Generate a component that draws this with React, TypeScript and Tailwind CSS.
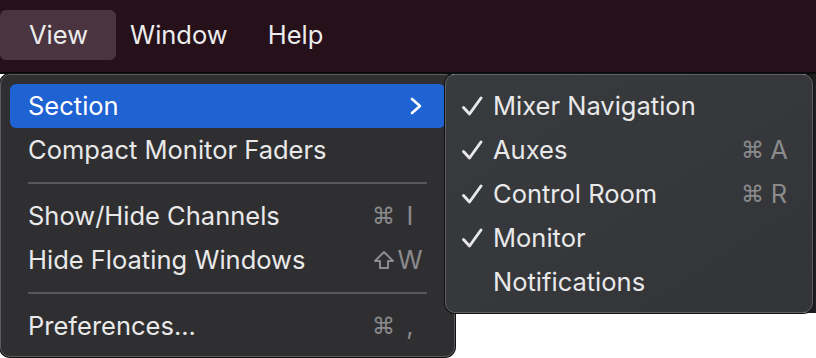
import React from "react";

const font = { fontFamily: "Inter, 'Noto Sans', sans-serif" };

function Check() {
  return (
    <svg width="22" height="20" viewBox="0 0 22 20" className="shrink-0">
      <path d="M2.5 11.5 L8.5 18 L20 2" fill="none" stroke="#e8e8e8" strokeWidth="2.9" strokeLinecap="round" strokeLinejoin="round" />
    </svg>
  );
}

function Chevron() {
  return (
    <svg width="14" height="18" viewBox="0 0 14 18">
      <path d="M3 2 L11 9 L3 16" fill="none" stroke="#ffffff" strokeWidth="2.6" strokeLinecap="round" strokeLinejoin="round" />
    </svg>
  );
}

function Cmd() {
  return (
    <span className="text-[23px] leading-none" style={{ fontFamily: "'DejaVu Sans', sans-serif" }}>⌘</span>
  );
}

function ShiftIcon() {
  return (
    <svg width="22" height="20" viewBox="0 0 22 20">
      <path d="M11 2 L20 11 L15 11 L15 18 L7 18 L7 11 L2 11 Z" fill="none" stroke="#8b8b8d" strokeWidth="2" strokeLinejoin="round" />
    </svg>
  );
}

function Shortcut({ mod, k }: { mod: "cmd" | "shift"; k: string }) {
  return (
    <div className="flex items-center text-[#8b8b8d]">
      <span className="flex w-[22px] justify-end">{mod === "cmd" ? <Cmd /> : <ShiftIcon />}</span>
      <span className="w-[30px] text-center">{k}</span>
    </div>
  );
}

function MainRow({ label, mod, k, active, sub }: { label: string; mod?: "cmd" | "shift"; k?: string; active?: boolean; sub?: boolean }) {
  return (
    <div className={`flex h-[44px] items-center justify-between rounded-[6px] pl-[18px] ${sub ? "pr-[22px]" : "pr-[20px]"} ${active ? "bg-[#1f62d2] text-white" : "text-[#e9e9ea]"}`}>
      <span>{label}</span>
      {sub && <Chevron />}
      {mod && k && <Shortcut mod={mod} k={k} />}
    </div>
  );
}

function SubRow({ label, checked, mod, k }: { label: string; checked?: boolean; mod?: "cmd" | "shift"; k?: string }) {
  return (
    <div className="flex h-[44px] items-center justify-between pl-[15px] pr-[18px] text-[#e9e9ea]">
      <div className="flex items-center gap-[10px]">
        <div className="w-[22px]">{checked && <Check />}</div>
        <span>{label}</span>
      </div>
      {mod && k && <Shortcut mod={mod} k={k} />}
    </div>
  );
}

function Sep() {
  return (
    <div className="flex h-[22px] items-center px-[18px]">
      <div className="h-[2px] w-full bg-[#58585b]" />
    </div>
  );
}

export default function App() {
  return (
    <div className="relative h-[358px] w-[816px] overflow-hidden bg-white text-[25.5px]" style={font}>
      <div className="flex h-[72px] items-start bg-[#26101a] pt-[10px] text-[#ececec]">
        <div className="flex h-[50px] w-[116px] items-center rounded-[6px] bg-[#4a3440] pl-[29px]">View</div>
        <div className="ml-[14px] flex h-[50px] items-center">Window</div>
        <div className="ml-[40px] flex h-[50px] items-center">Help</div>
      </div>
      <div className="h-[2px] bg-[#0a0a0a]" />
      <div className="absolute right-0 top-[74px] h-[239px] w-[10px] bg-[#1e1e20]" />

      <div className="absolute left-0 top-[74px] h-[283px] w-[455px] rounded-[10px] border border-[#5c5c5e] bg-[#2f2f31] px-[9px] py-[9px] shadow-[0_0_0_1px_#111]">
        <MainRow label="Section" active sub />
        <MainRow label="Compact Monitor Faders" />
        <Sep />
        <MainRow label="Show/Hide Channels" mod="cmd" k="I" />
        <MainRow label="Hide Floating Windows" mod="shift" k="W" />
        <Sep />
        <MainRow label="Preferences..." mod="cmd" k="," />
      </div>

      <div className="absolute left-[445px] top-[74px] h-[239px] w-[368px] rounded-[10px] border border-[#5f6163] bg-gradient-to-br from-[#383b3e] to-[#333437] py-[9px] shadow-[0_0_0_1px_#111]">
        <SubRow label="Mixer Navigation" checked />
        <SubRow label="Auxes" checked mod="cmd" k="A" />
        <SubRow label="Control Room" checked mod="cmd" k="R" />
        <SubRow label="Monitor" checked />
        <SubRow label="Notifications" />
      </div>
    </div>
  );
}
